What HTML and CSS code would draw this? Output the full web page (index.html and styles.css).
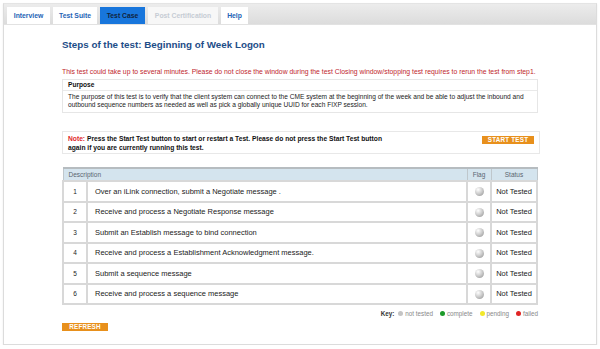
FILE: index.html
```html
<!DOCTYPE html>
<html>
<head>
<meta charset="utf-8">
<link rel="stylesheet" href="styles.css">
</head>
<body>
<div class="frame">
  <div class="tabs">
    <div class="tab t-interview">Interview</div>
    <div class="tab t-suite">Test Suite</div>
    <div class="tab t-case active">Test Case</div>
    <div class="tab t-post disabled">Post Certification</div>
    <div class="tab t-help">Help</div>
  </div>
  <div class="content">
    <h1 class="title">Steps of the test: Beginning of Week Logon</h1>
    <p class="warn">This test could take up to several minutes. Please do not close the window during the test Closing window/stopping test requires to rerun the test from step1.</p>
    <div class="purpose">
      <div class="purpose-head">Purpose</div>
      <div class="purpose-body">The purpose of this test is to verify that the client system can connect to the CME system at the beginning of the week and be able to adjust the inbound and outbound sequence numbers as needed as well as pick a globally unique UUID for each FIXP session.</div>
    </div>
    <div class="note">
      <div class="note-text"><span class="note-label">Note:</span> Press the Start Test button to start or restart a Test. Please do not press the Start Test button<br>again if you are currently running this test.</div>
      <div class="btn btn-start">START TEST</div>
    </div>
    <table class="steps">
      <thead>
        <tr><th class="c-desc" colspan="2">Description</th><th class="c-flag">Flag</th><th class="c-status">Status</th></tr>
      </thead>
      <tbody>
        <tr><td class="c-num">1</td><td class="c-text">Over an iLink connection, submit a Negotiate message .</td><td class="c-flag"><span class="ball"></span></td><td class="c-status">Not Tested</td></tr>
        <tr><td class="c-num">2</td><td class="c-text">Receive and process a Negotiate Response message</td><td class="c-flag"><span class="ball"></span></td><td class="c-status">Not Tested</td></tr>
        <tr><td class="c-num">3</td><td class="c-text">Submit an Establish message to bind connection</td><td class="c-flag"><span class="ball"></span></td><td class="c-status">Not Tested</td></tr>
        <tr><td class="c-num">4</td><td class="c-text">Receive and process a Establishment Acknowledgment message.</td><td class="c-flag"><span class="ball"></span></td><td class="c-status">Not Tested</td></tr>
        <tr><td class="c-num">5</td><td class="c-text">Submit a sequence message</td><td class="c-flag"><span class="ball"></span></td><td class="c-status">Not Tested</td></tr>
        <tr><td class="c-num">6</td><td class="c-text">Receive and process a sequence message</td><td class="c-flag"><span class="ball"></span></td><td class="c-status">Not Tested</td></tr>
      </tbody>
    </table>
    <div class="key">
      <span class="key-label">Key:</span>
      <span class="dot d-gray"></span><span class="key-item">not tested</span>
      <span class="dot d-green"></span><span class="key-item">complete</span>
      <span class="dot d-yellow"></span><span class="key-item">pending</span>
      <span class="dot d-red"></span><span class="key-item">failed</span>
    </div>
    <div class="btn btn-refresh">REFRESH</div>
  </div>
</div>
</body>
</html>
```
FILE: styles.css
```css
html, body {
  margin: 0;
  padding: 0;
  background: #ffffff;
}
body {
  font-family: "Liberation Sans", Arial, sans-serif;
  color: #222;
}
.frame {
  margin: 3px 3px 0 3px;
  height: 342px;
  border: 1px solid #dcdcdc;
  border-top-color: #e4e4e4;
  box-sizing: border-box;
  box-shadow: 0 1px 2px rgba(0,0,0,0.08);
}
.tabs {
  display: flex;
  align-items: flex-end;
  gap: 3px;
  height: 20px;
  padding-left: 3px;
  background: linear-gradient(#ececec, #dcdcdc);
  border-bottom: 1px solid #e2e2e2;
}
.tab {
  height: 17px;
  line-height: 17px;
  background: #fff;
  font-size: 6.8px;
  font-weight: bold;
  color: #2463b5;
  text-align: center;
  box-sizing: border-box;
}
.t-interview { width: 43px; }
.t-suite { width: 44px; }
.t-case { width: 45px; }
.t-post { width: 70px; }
.t-help { width: 27px; }
.tab.active {
  background: #1876dc;
  color: #10243f;
}
.tab.disabled {
  color: #c6ccd4;
  background: #f7f7f7;
}
.content {
  padding: 13px 0 0 58px;
  width: 476px;
}
.title {
  margin: 0;
  font-size: 9.8px;
  font-weight: bold;
  color: #1d4d88;
  line-height: 13px;
}
.warn {
  margin: 16px 0 0 0;
  font-size: 6.85px;
  color: #c0262d;
  line-height: 9px;
  white-space: nowrap;
}
.purpose {
  margin-top: 3px;
  border: 1px solid #e6e6e6;
  font-size: 6.6px;
  line-height: 8px;
}
.purpose-head {
  font-weight: bold;
  color: #111;
  padding: 1px 5px 1px;
  border-bottom: 1px solid #e9e9e9;
}
.purpose-body {
  padding: 2px 5px 3px;
  color: #222;
}
.note {
  margin-top: 18px;
  border: 1px solid #e8e8e8;
  display: flex;
  align-items: flex-start;
  justify-content: space-between;
  padding: 2px 5px 1px 5px;
  width: 478px;
  box-sizing: border-box;
}
.note-text {
  font-size: 6.7px;
  font-weight: bold;
  line-height: 9px;
  width: 340px;
  color: #111;
  white-space: nowrap;
}
.note-label { color: #e0252a; }
.btn {
  background: #e8901c;
  color: #fff;
  font-weight: bold;
  font-size: 6.3px;
  text-align: center;
  line-height: 8px;
  height: 8px;
  letter-spacing: 0.2px;
}
.btn-start {
  width: 52px;
  margin-top: 2px;
}
.steps {
  margin-top: 13px;
  width: 476px;
  border-collapse: collapse;
  font-size: 7.5px;
}
.steps th {
  background: #d4e4ee;
  color: #5a6670;
  font-weight: normal;
  font-size: 6.5px;
  height: 11px;
  padding: 0;
  border: 1px solid #bfc7cc;
  border-top: 2px solid #b6bcc0;
}
.steps th.c-desc { text-align: left; padding-left: 5px; }
.steps td {
  height: 18.5px;
  border: 2px solid #d8d8d8;
  padding: 0;
  color: #222;
}
.c-num { width: 22px; text-align: center; font-size: 6.5px; }
.c-text { padding-left: 7px !important; }
.c-flag { width: 22px; text-align: center; }
.c-status { width: 44px; text-align: center; }
.ball {
  display: inline-block;
  width: 9px;
  height: 9px;
  border-radius: 50%;
  background: radial-gradient(circle at 35% 30%, #ffffff 0%, #cfcfcf 45%, #8e8e8e 100%);
  vertical-align: middle;
}
.key {
  display: flex;
  justify-content: flex-end;
  align-items: center;
  gap: 2px;
  margin-top: 4px;
  font-size: 6.3px;
  color: #888;
  height: 9px;
}
.key-label { font-weight: bold; color: #333; margin-right: 2px; }
.key-item { margin-right: 5px; }
.key-item:last-child { margin-right: 0; }
.dot {
  display: inline-block;
  width: 5px;
  height: 5px;
  border-radius: 50%;
}
.d-gray { background: #c4c4c4; }
.d-green { background: #1c9a2a; }
.d-yellow { background: #f2e82a; }
.d-red { background: #e02424; }
.btn-refresh {
  width: 46px;
  margin-top: 5px;
}
```
